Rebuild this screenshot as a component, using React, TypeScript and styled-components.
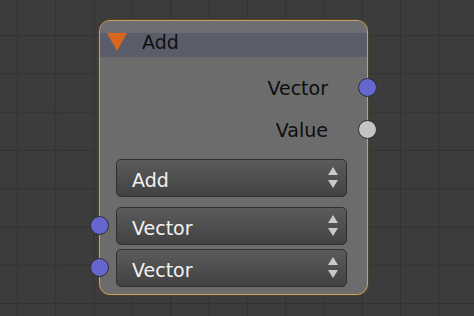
import styled, { createGlobalStyle } from "styled-components";

const GlobalStyle = createGlobalStyle`
  html, body {
    margin: 0;
    padding: 0;
    background: #3c3c3c;
  }
  body {
    font-family: "DejaVu Sans", "Liberation Sans", sans-serif;
  }
`;

const Canvas = styled.div`
  width: 474px;
  height: 316px;
  box-sizing: border-box;
  padding: 20px 0 0 99px;
  background-color: #3c3c3c;
  background-image: linear-gradient(to right, #323232 1px, transparent 1px),
    linear-gradient(to bottom, #323232 1px, transparent 1px);
  background-size: 38.3px 38.3px;
  background-position: 17px 35px;
  overflow: hidden;
`;

const Node = styled.div`
  position: relative;
  width: 269px;
  height: 275px;
  box-sizing: border-box;
  border: 1px solid #c9a15f;
  border-radius: 11px;
  background: #6c6c6c;
  box-shadow: 0 0 0 1px #4a4232;
`;

const Header = styled.div`
  display: flex;
  align-items: center;
  gap: 15px;
  height: 36px;
  box-sizing: border-box;
  padding: 6px 0 0 7px;
  border-radius: 10px 10px 0 0;
  background: linear-gradient(
    to bottom,
    #6d6d72 0px,
    #6d6d72 12px,
    #5b5e6a 12px,
    #5b5e6a 100%
  );
  font-size: 19px;
  color: #101010;
`;

const Title = styled.span`
  line-height: 24px;
`;

const Body = styled.div`
  display: flex;
  flex-direction: column;
  padding: 10px 20px 0 16px;
`;

const OutputRow = styled.div`
  position: relative;
  display: flex;
  align-items: center;
  justify-content: flex-end;
  height: 42px;
  padding-right: 19px;
  font-size: 19px;
  color: #0e0e0e;
`;

const Socket = styled.span<{ $color: string; $side: "left" | "right" }>`
  position: absolute;
  top: 50%;
  ${(p) => (p.$side === "right" ? "right: -30px;" : "left: -27px;")}
  width: 17px;
  height: 17px;
  margin-top: -10px;
  border-radius: 50%;
  background: ${(p) => p.$color};
  border: 1px solid #2c2c34;
`;

const Select = styled.div<{ $gap: number }>`
  position: relative;
  display: flex;
  align-items: center;
  justify-content: space-between;
  height: 38px;
  box-sizing: border-box;
  margin-top: ${(p) => p.$gap}px;
  padding: 0 8px 0 15px;
  border: 1px solid #2f2f2f;
  border-radius: 5px;
  background: linear-gradient(to bottom, #5b5b5b, #424242);
  font-size: 19px;
  color: #f2f2f2;
`;

const Label = styled.span`
  padding-top: 3px;
`;

const Arrows = styled.svg`
  display: block;
`;

const UpDown = () => (
  <Arrows width="10" height="22" viewBox="0 0 10 22">
    <polygon points="5,0 10,8 0,8" fill="#c9c9c9" />
    <polygon points="0,13 10,13 5,21" fill="#c9c9c9" />
  </Arrows>
);

const Collapse = () => (
  <svg width="20" height="18" viewBox="0 0 20 18">
    <polygon points="0,0 20,0 10,18" fill="#d8661f" />
  </svg>
);

export default function App() {
  return (
    <>
      <GlobalStyle />
      <Canvas>
        <Node>
          <Header>
            <Collapse />
            <Title>Add</Title>
          </Header>
          <Body>
            <OutputRow>
              Vector
              <Socket $color="#6666cf" $side="right" />
            </OutputRow>
            <OutputRow>
              Value
              <Socket $color="#c4c4c4" $side="right" />
            </OutputRow>
            <Select $gap={8}>
              <Label>Add</Label>
              <UpDown />
            </Select>
            <Select $gap={10}>
              <Label>Vector</Label>
              <Socket $color="#6666cf" $side="left" />
              <UpDown />
            </Select>
            <Select $gap={4}>
              <Label>Vector</Label>
              <Socket $color="#6666cf" $side="left" />
              <UpDown />
            </Select>
          </Body>
        </Node>
      </Canvas>
    </>
  );
}
